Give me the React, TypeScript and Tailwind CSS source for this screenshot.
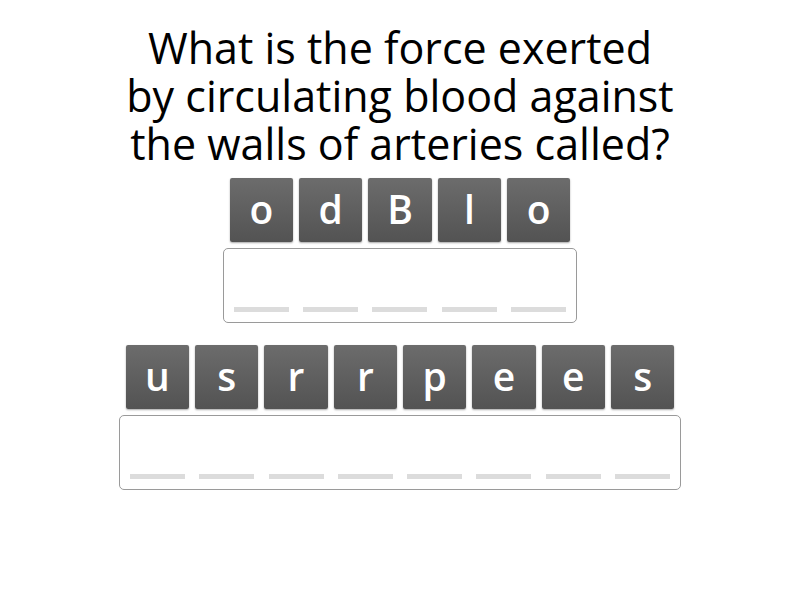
import React from 'react'

const rows = [
  { tiles: ['o', 'd', 'B', 'l', 'o'] },
  { tiles: ['u', 's', 'r', 'r', 'p', 'e', 'e', 's'] },
]

function Tile({ ch }: { ch: string }) {
  return (
    <div className="w-[63.33px] h-[64px] rounded-[2px] bg-gradient-to-b from-[#6c6c6c] to-[#535353] shadow-[0_1px_2px_rgba(0,0,0,0.35)] flex items-center justify-center text-white text-[39px] font-semibold leading-none pb-[3px]">
      {ch}
    </div>
  )
}

function AnswerBox({ count }: { count: number }) {
  return (
    <div className="h-[75px] border border-[#9a9a9a] rounded-[5px] px-[3px] flex items-end pb-[10px] bg-white">
      {Array.from({ length: count }).map((_, i) => (
        <div key={i} className="w-[69.33px] flex justify-center">
          <div className="w-[55px] h-[5px] bg-[#dcdcdc]" />
        </div>
      ))}
    </div>
  )
}

export default function App() {
  return (
    <div
      className="w-[800px] h-[600px] bg-white flex flex-col items-center pt-[24px]"
      style={{ fontFamily: '"Open Sans", sans-serif' }}
    >
      <h1 className="text-[43px] leading-[48px] text-black text-center w-[640px]">
        What is the force exerted
        <br />
        by circulating blood against
        <br />
        the walls of arteries called?
      </h1>
      <div className="mt-[10px] flex flex-col items-center">
        {rows.map((row, r) => (
          <div key={r} className={r > 0 ? 'mt-[22px] flex flex-col items-center' : 'flex flex-col items-center'}>
            <div className="flex gap-[6px]">
              {row.tiles.map((ch, i) => (
                <Tile key={i} ch={ch} />
              ))}
            </div>
            <div className="mt-[6px]">
              <AnswerBox count={row.tiles.length} />
            </div>
          </div>
        ))}
      </div>
    </div>
  )
}
